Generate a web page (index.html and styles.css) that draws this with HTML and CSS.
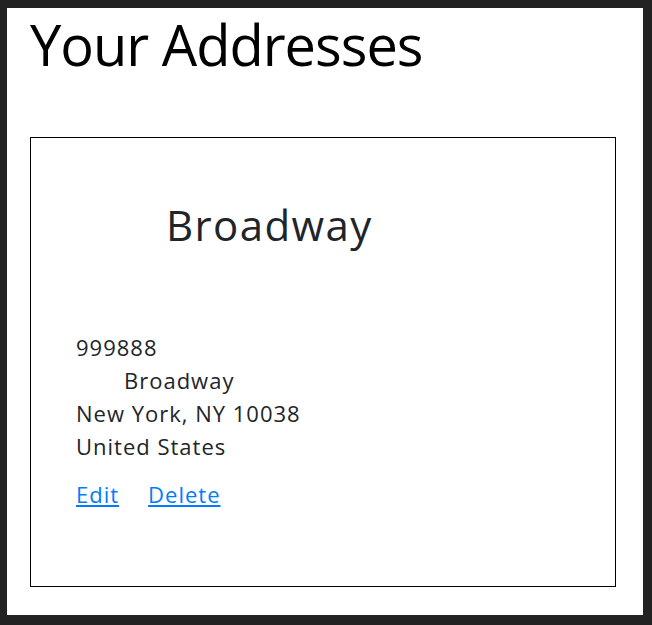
FILE: index.html
```html
<!DOCTYPE html>
<html lang="en">
<head>
  <meta charset="UTF-8">
  <meta name="viewport" content="width=device-width, initial-scale=1.0">
  <title>Your Addresses</title>
  <link rel="stylesheet" href="styles.css">
</head>
<body>
  <h1 class="page-title">Your Addresses</h1>

  <div class="address-card">
    <h2 class="address-name">Broadway</h2>
    <div class="address-body">
      <div>999888</div>
      <div class="street">Broadway</div>
      <div>New York, NY 10038</div>
      <div>United States</div>
    </div>
    <div class="address-actions">
      <a href="#">Edit</a>
      <a href="#">Delete</a>
    </div>
  </div>
</body>
</html>
```

FILE: styles.css
```css
html {
  background-color: #222;
}
body {
  margin: 8px 9px 10px 7px;
  padding: 3px 27px 0 23px;
  min-height: 607px;
  box-sizing: border-box;
  background-color: #fff;
  font-family: "Open Sans", "Noto Sans", sans-serif;
  font-size: 22px;
  line-height: 33px;
  letter-spacing: 1px;
  color: #212529;
}
.page-title {
  margin: 0 0 59px 0;
  font-size: 56px;
  font-weight: normal;
  line-height: 1.2;
  letter-spacing: -1px;
  color: #000;
}
.address-card {
  border: 1px solid #000;
  padding: 62px 44px 75px 45px;
}
.address-name {
  margin: 0 0 80px 90px;
  font-size: 42px;
  font-weight: normal;
  line-height: 1.2;
  letter-spacing: 1.4px;
}
.street {
  padding-left: 48px;
}
.address-actions {
  display: flex;
  gap: 29px;
  margin-top: 15px;
}
.address-actions a {
  color: #007bff;
}
```
